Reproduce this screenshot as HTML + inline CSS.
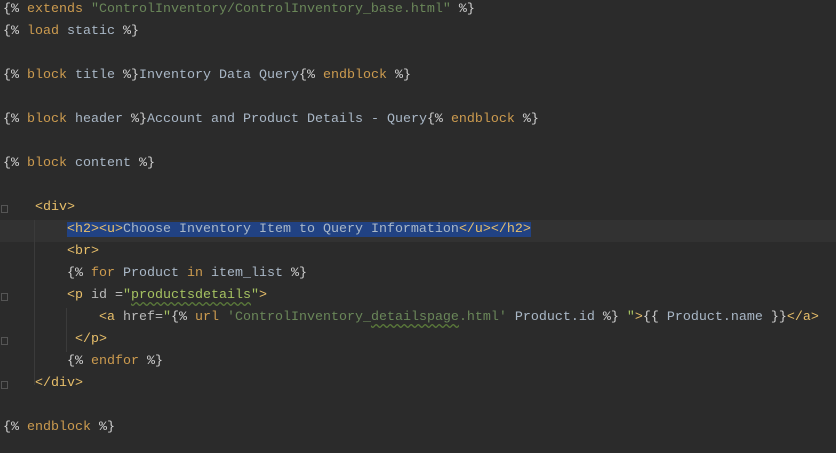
<!DOCTYPE html>
<html><head><meta charset="utf-8"><style>
html,body{margin:0;padding:0;background:#2b2b2b;width:836px;height:453px;overflow:hidden}
.code{position:absolute;left:3px;top:-1px;font-family:"Liberation Mono",monospace;font-size:13.33px;line-height:22px;color:#a9b7c6;white-space:pre}
.b{color:#d0d0d0}.k{color:#cc9b4f}.s{color:#6a8759}.t{color:#e8bf6a}.a{color:#bababa}.g{color:#a5c261}
.sel{background:#214283}
.cur{position:absolute;left:0;top:220px;width:836px;height:22px;background:#323232}
.guide{position:absolute;width:1px;background:#3b3b3b}
.w{text-decoration:underline wavy #5b7a3a;text-underline-offset:3px}
.fold{position:absolute;left:1px;width:5px;height:6px;border:1px solid #555}
</style></head><body>
<div class="cur"></div>
<div class="guide" style="left:34px;top:220px;height:165px"></div>
<div class="guide" style="left:66px;top:308px;height:44px"></div>
<div class="fold" style="top:205px"></div>
<div class="fold" style="top:293px"></div>
<div class="fold" style="top:337px"></div>
<div class="fold" style="top:381px"></div>
<div class="code"><span class="b">{% </span><span class="k">extends</span> <span class="s">"ControlInventory/ControlInventory_base.html"</span><span class="b"> %}</span>
<span class="b">{% </span><span class="k">load</span> static<span class="b"> %}</span>

<span class="b">{% </span><span class="k">block</span> title<span class="b"> %}</span>Inventory Data Query<span class="b">{% </span><span class="k">endblock</span><span class="b"> %}</span>

<span class="b">{% </span><span class="k">block</span> header<span class="b"> %}</span>Account and Product Details - Query<span class="b">{% </span><span class="k">endblock</span><span class="b"> %}</span>

<span class="b">{% </span><span class="k">block</span> content<span class="b"> %}</span>

    <span class="t">&lt;div&gt;</span>
        <span class="sel"><span class="t">&lt;h2&gt;&lt;u&gt;</span>Choose Inventory Item to Query Information<span class="t">&lt;/u&gt;&lt;/h2&gt;</span></span>
        <span class="t">&lt;br&gt;</span>
        <span class="b">{% </span><span class="k">for</span> Product <span class="k">in</span> item_list<span class="b"> %}</span>
        <span class="t">&lt;p </span><span class="a">id =</span><span class="g">"<span class="w">productsdetails</span>"</span><span class="t">&gt;</span>
            <span class="t">&lt;a </span><span class="a">href=</span><span class="g">"</span><span class="b">{% </span><span class="k">url</span> <span class="s">'ControlInventory_<span class="w">detailspage</span>.html'</span> Product.id<span class="b"> %}</span> <span class="g">"</span><span class="t">&gt;</span><span class="b">{{ </span>Product.name<span class="b"> }}</span><span class="t">&lt;/a&gt;</span>
         <span class="t">&lt;/p&gt;</span>
        <span class="b">{% </span><span class="k">endfor</span><span class="b"> %}</span>
    <span class="t">&lt;/div&gt;</span>

<span class="b">{% </span><span class="k">endblock</span><span class="b"> %}</span></div>
</body></html>
